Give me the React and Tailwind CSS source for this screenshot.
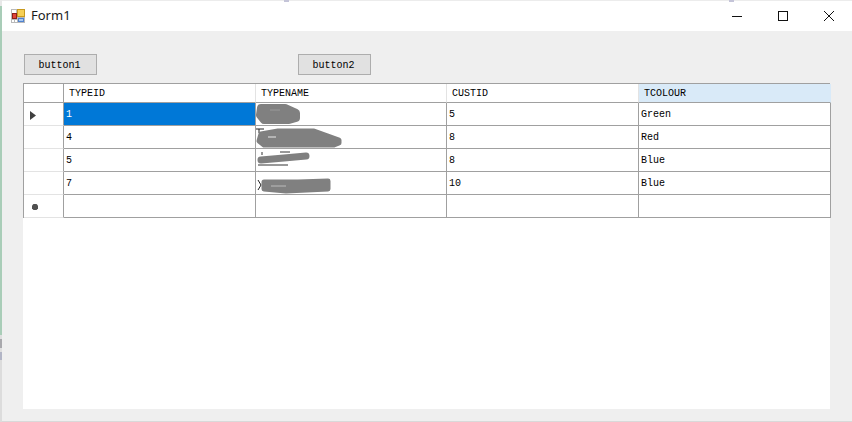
import React from 'react';

const columns = ['TYPEID', 'TYPENAME', 'CUSTID', 'TCOLOUR'];

const rows = [
  { id: '1', cust: '5', colour: 'Green', blob: 'first' },
  { id: '4', cust: '8', colour: 'Red', blob: 'second' },
  { id: '5', cust: '8', colour: 'Blue', blob: 'third' },
  { id: '7', cust: '10', colour: 'Blue', blob: 'fourth' },
];

const FormIcon = () => (
  <svg width="14" height="14" viewBox="0 0 14 14" shapeRendering="crispEdges">
    <rect x="0" y="0" width="14" height="14" fill="#b9b9b9" />
    <rect x="1" y="1" width="4" height="3" fill="#fff" />
    <rect x="1" y="11" width="2" height="2" fill="#fff" />
    <rect x="4" y="11" width="2" height="2" fill="#fff" />
    <rect x="6" y="0" width="8" height="8" fill="#c89a1e" />
    <rect x="7" y="1" width="6" height="6" fill="#f6cf55" />
    <rect x="1" y="4" width="5" height="6" fill="#8e1f1a" />
    <rect x="2" y="5" width="3" height="4" fill="#e0453a" />
    <rect x="7" y="9" width="6" height="4" fill="#4f82cf" />
    <rect x="8" y="10" width="4" height="2" fill="#a9c8ef" />
  </svg>
);

// the scribbled-out names, drawn over the cell text
const Scribble = ({ kind }) => (
  <svg className="absolute left-0 top-0" width="191" height="22" viewBox="0 0 191 22">
    {kind === 'first' && (
      <>
        <path d="M5 5 H29 L40 10 V15 L33 17 H8 L4 12 Z" fill="#808080" stroke="#808080" strokeWidth="8" strokeLinejoin="round" />
        <path d="M14 7 H24" stroke="#999" strokeWidth="1" />
      </>
    )}
    {kind === 'second' && (
      <>
        <path d="M0 3 H8 M3 3 V7" stroke="#222" strokeWidth="1" fill="none" />
        <path d="M5 8 L22 5 H58 L83 14 V17 L78 19 H8 L3 15 Z" fill="#808080" stroke="#808080" strokeWidth="5" strokeLinejoin="round" />
        <path d="M12 11 H20" stroke="#e8e8e8" strokeWidth="1" />
      </>
    )}
    {kind === 'third' && (
      <>
        <path d="M2 16 H32 M6 3 V6 M24 3 H34" stroke="#333" strokeWidth="1" fill="none" />
        <path d="M5 11 L28 9 L50 7" stroke="#808080" strokeWidth="7" strokeLinecap="round" fill="none" />
      </>
    )}
    {kind === 'fourth' && (
      <>
        <path d="M2 8 L5 13 L2 18" stroke="#222" strokeWidth="1" fill="none" />
        <path d="M8 10 H42 L72 9 V17 L30 19 L8 17 Z" fill="#808080" stroke="#808080" strokeWidth="5" strokeLinejoin="round" />
        <path d="M15 14 H30" stroke="#bbb" strokeWidth="1" />
      </>
    )}
  </svg>
);

const Button = ({ children, className = '' }) => (
  <button className={`w-[73px] h-[21px] pr-[2px] pt-[1px] bg-[#e1e1e1] border border-[#adadad] text-[10px] text-black ${className}`}>
    {children}
  </button>
);

const Cell = ({ children, className = '' }) => (
  <div className={`relative h-[23px] border-r border-b border-[#a0a0a0] pl-[2px] pt-[1px] flex items-center text-[10px] text-black ${className}`}>
    {children}
  </div>
);

const RowHeader = ({ children }) => (
  <div className="h-[23px] border-r border-b border-r-[#a0a0a0] border-b-[#e3e3e3] flex items-center pl-[6px]">
    {children}
  </div>
);

// screen edge left of the window: the desktop shows through here
const EdgeStrip = () => (
  <div className="w-[2px] h-[422px] shrink-0 flex flex-col bg-[#dcdcdc]">
    <div className="h-[6px] bg-[#e8e8e8]" />
    <div className="h-[329px] bg-[#a9cdb8]" />
    <div className="h-[4px] bg-[#dfdfdf]" />
    <div className="h-[9px] bg-[#a9a9ad]" />
    <div className="h-[4px] bg-[#dfdfdf]" />
    <div className="h-[8px] bg-[#b2b5c6]" />
  </div>
);

export default function App() {
  return (
    <div className="w-[852px] h-[422px] flex overflow-hidden font-['Liberation_Mono',monospace]">
      <EdgeStrip />
      <div className="flex-1 flex flex-col bg-[#efefef] border-b border-b-[#d9d9d9]">
        {/* Title bar */}
        <div className="relative h-[31px] shrink-0 bg-white border-t border-t-[#ececec] flex items-center">
          <span className="absolute left-[282px] top-[-1px] w-[5px] h-[2px] bg-[#c4c4d8]" />
          <span className="absolute left-[727px] top-[-1px] w-[5px] h-[2px] bg-[#c4c4d8]" />
          <div className="ml-[9px]"><FormIcon /></div>
          <span className="ml-[6px] text-[13px] text-[#1a1a1a] font-['Noto_Sans',sans-serif]">Form1</span>
          <div className="ml-auto flex items-center text-black">
            <svg width="46" height="30" viewBox="0 0 46 30"><path d="M18 15.5 H28" stroke="#111" strokeWidth="1" /></svg>
            <svg width="46" height="30" viewBox="0 0 46 30"><rect x="18.5" y="10.5" width="9" height="9" fill="none" stroke="#111" /></svg>
            <svg width="46" height="30" viewBox="0 0 46 30"><path d="M18 10 L28 20 M28 10 L18 20" stroke="#111" strokeWidth="1" /></svg>
          </div>
        </div>

        {/* Buttons */}
        <div className="h-[52px] shrink-0 flex items-start pt-[23px] pl-[22px]">
          <Button>button1</Button>
          <Button className="ml-[201px]">button2</Button>
        </div>

        {/* Data grid */}
        <div className="w-[807px] h-[326px] ml-[21px] bg-white border-t border-t-[#a0a0a0]">
          <div className="grid grid-cols-[40px_192px_191px_192px_192px] border-l border-l-[#a0a0a0] w-[808px]">
            <div className="h-[19px] border-r border-b border-[#a0a0a0]" />
            {columns.map((name) => (
              <div
                key={name}
                className={`h-[19px] pl-[5px] pt-[1px] flex items-center text-[10px] text-black border-b border-b-[#a0a0a0] ${
                  name === 'TCOLOUR' ? 'bg-[#d9eaf8] border-r border-r-[#d9eaf8]' : 'border-r border-r-[#e3e3e3]'
                }`}
              >
                {name}
              </div>
            ))}

            {rows.map((row, i) => (
              <React.Fragment key={row.id}>
                <RowHeader>
                  {i === 0 && (
                    <svg className="mt-[2px]" width="6" height="9" viewBox="0 0 6 9"><path d="M0 0 L6 4.5 L0 9 Z" fill="#404040" /></svg>
                  )}
                </RowHeader>
                <Cell className={i === 0 ? 'bg-[#0078d7] text-white' : ''}>{row.id}</Cell>
                <Cell><Scribble kind={row.blob} /></Cell>
                <Cell>{row.cust}</Cell>
                <Cell>{row.colour}</Cell>
              </React.Fragment>
            ))}

            <RowHeader>
              <svg className="ml-[2px] mt-[1px]" width="6" height="6" viewBox="0 0 6 6">
                <path d="M1.5 0 H4.5 L6 1.5 V4.5 L4.5 6 H1.5 L0 4.5 V1.5 Z" fill="#505050" />
              </svg>
            </RowHeader>
            <Cell />
            <Cell />
            <Cell />
            <Cell />
          </div>
        </div>
      </div>
    </div>
  );
}
